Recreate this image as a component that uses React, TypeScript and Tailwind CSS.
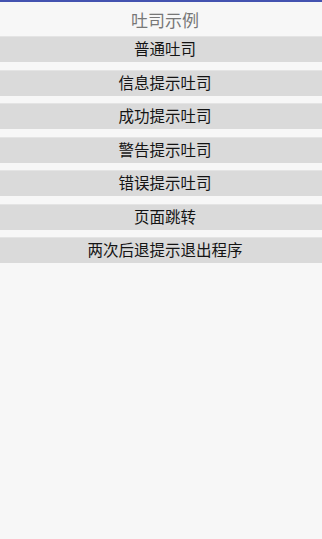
const items = ['普通吐司', '信息提示吐司', '成功提示吐司', '警告提示吐司', '错误提示吐司', '页面跳转', '两次后退提示退出程序']

export default function App() {
  return (
    <div
      className="h-[539px] w-[322px] bg-[#f7f7f7]"
      style={{ fontFamily: '"Noto Sans CJK SC", "Noto Sans", sans-serif' }}
    >
      <div className="h-[2px] bg-[#4453b0]" />
      {/* 标题 */}
      <div className="flex h-[34px] items-center justify-center pl-[8px] text-[17px] leading-none text-[#777]">
        吐司示例
      </div>
      <div className="flex flex-col gap-[7.5px]">
        {items.map((t) => (
          <button
            key={t}
            className="flex h-[26px] w-full items-center justify-center border-t border-[#e4e4e4] bg-[#dadada] pb-[1px] pl-[8px] text-[15.5px] leading-none text-[#141414]"
          >
            {t}
          </button>
        ))}
      </div>
    </div>
  )
}
